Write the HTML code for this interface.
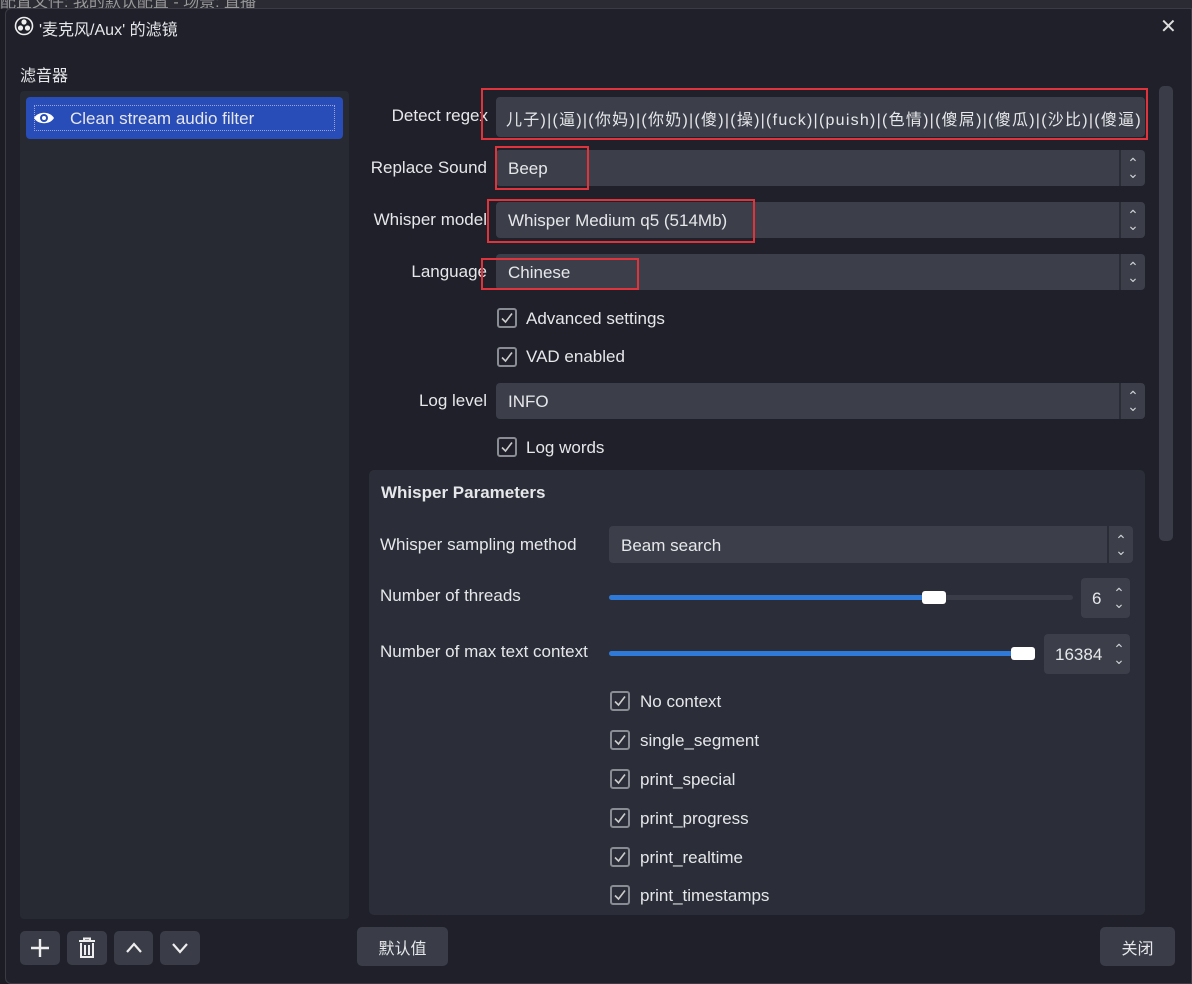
<!DOCTYPE html>
<html><head><meta charset="utf-8"><style>
*{box-sizing:border-box;margin:0;padding:0}
body{width:1192px;height:984px;background:#1b1c24;font-family:"Liberation Sans","Noto Sans CJK SC",sans-serif;color:#e6e7ea;font-size:17px;position:relative;overflow:hidden}
.a{position:absolute}
.lbl{position:absolute;text-align:right;white-space:nowrap}
.in{position:absolute;background:#3c3f4a;border-radius:4px;padding-left:12px;padding-top:2px;display:flex;align-items:center;white-space:nowrap;overflow:hidden}
.sp{position:absolute;right:0;top:0;bottom:0;width:26px;border-left:2px solid #2b2d36;display:flex;flex-direction:column;align-items:center;justify-content:center;font-size:14px;color:#cfd0d4;line-height:10px}
.red{position:absolute;border:2px solid #e0343c}
.cb{position:absolute;width:20px;height:20px;border:2px solid #8a8c94;border-radius:3px}
.cb svg{position:absolute;left:1px;top:1px}
.ct{position:absolute;white-space:nowrap;padding-top:1px}
.btn{position:absolute;background:#3a3d48;border-radius:5px;display:flex;align-items:center;justify-content:center}
</style></head><body>
<div class="a" style="left:0;top:0;width:1192px;height:9px;background:#2a2b33;overflow:hidden"><div class="a" style="left:0;top:-12px;color:#999;font-size:16px">配置文件: 我的默认配置 - 场景: 直播</div></div>
<div class="a" style="left:5px;top:8px;width:1187px;height:976px;background:#1f2029;border:1px solid #3a3b44;border-radius:6px 0 0 6px"></div>
<svg class="a" style="left:14px;top:16px" width="20" height="20" viewBox="0 0 20 20"><circle cx="10" cy="10" r="8.5" fill="none" stroke="#eee" stroke-width="1.6"/><circle cx="10" cy="6" r="2.6" fill="#eee"/><circle cx="6.5" cy="12" r="2.6" fill="#eee"/><circle cx="13.5" cy="12" r="2.6" fill="#eee"/></svg>
<div class="a" style="left:39px;top:16px;font-size:16px">'麦克风/Aux' 的滤镜</div>
<div class="a" style="left:1160px;top:14px;font-size:20px;color:#ddd">✕</div>
<div class="a" style="left:20px;top:62px;font-size:16px">滤音器</div>
<div class="a" style="left:20px;top:91px;width:329px;height:828px;background:#272a33;border-radius:4px"></div>
<div class="a" style="left:26px;top:97px;width:317px;height:42px;background:#284cb8;border-radius:4px"></div>
<div class="a" style="left:34px;top:105px;width:301px;height:26px;border:1px dotted #9aa4d8"></div>
<svg class="a" style="left:33px;top:110px" width="22" height="16" viewBox="0 0 22 16"><path d="M1 8C5 1 17 1 21 8C17 15 5 15 1 8Z" fill="#fff"/><circle cx="11" cy="8" r="4" fill="#284cb8"/><circle cx="11" cy="8" r="2" fill="#fff"/></svg>
<div class="a" style="left:70px;top:109px">Clean stream audio filter</div>

<div class="lbl" style="right:704px;top:106px">Detect regex</div>
<div class="in" style="left:496px;top:97px;width:649px;height:40px;font-size:16px;padding-left:10px;letter-spacing:1.25px">儿子)|(逼)|(你妈)|(你奶)|(傻)|(操)|(fuck)|(puish)|(色情)|(傻屌)|(傻瓜)|(沙比)|(傻逼)</div>
<div class="red" style="left:481px;top:88px;width:667px;height:52px"></div>

<div class="lbl" style="right:705px;top:158px">Replace Sound</div>
<div class="in" style="left:496px;top:150px;width:649px;height:36px">Beep<div class="sp">⌃<br>⌄</div></div>
<div class="red" style="left:495px;top:146px;width:94px;height:44px"></div>

<div class="lbl" style="right:705px;top:210px">Whisper model</div>
<div class="in" style="left:496px;top:202px;width:649px;height:36px">Whisper Medium q5 (514Mb)<div class="sp">⌃<br>⌄</div></div>
<div class="red" style="left:487px;top:199px;width:268px;height:44px"></div>

<div class="lbl" style="right:705px;top:262px">Language</div>
<div class="in" style="left:496px;top:254px;width:649px;height:36px">Chinese<div class="sp">⌃<br>⌄</div></div>
<div class="red" style="left:481px;top:258px;width:158px;height:32px"></div>

<div class="cb" style="left:497px;top:308px"><svg width="14" height="14" viewBox="0 0 14 14"><path d="M2 7.5L5.5 11L12 2.5" fill="none" stroke="#ccc" stroke-width="1.6"/></svg></div>
<div class="ct" style="left:526px;top:308px">Advanced settings</div>
<div class="cb" style="left:497px;top:347px"><svg width="14" height="14" viewBox="0 0 14 14"><path d="M2 7.5L5.5 11L12 2.5" fill="none" stroke="#ccc" stroke-width="1.6"/></svg></div>
<div class="ct" style="left:526px;top:346px">VAD enabled</div>

<div class="lbl" style="right:705px;top:391px">Log level</div>
<div class="in" style="left:496px;top:383px;width:649px;height:36px">INFO<div class="sp">⌃<br>⌄</div></div>

<div class="cb" style="left:497px;top:437px"><svg width="14" height="14" viewBox="0 0 14 14"><path d="M2 7.5L5.5 11L12 2.5" fill="none" stroke="#ccc" stroke-width="1.6"/></svg></div>
<div class="ct" style="left:526px;top:437px">Log words</div>

<div class="a" style="left:1159px;top:86px;width:14px;height:455px;background:#3a3d48;border-radius:5px"></div>

<div class="a" style="left:369px;top:470px;width:776px;height:445px;background:#2b2e38;border-radius:5px"></div>
<div class="a" style="left:381px;top:483px;font-weight:bold">Whisper Parameters</div>
<div class="ct" style="left:380px;top:534px">Whisper sampling method</div>
<div class="in" style="left:609px;top:526px;width:524px;height:37px">Beam search<div class="sp">⌃<br>⌄</div></div>

<div class="ct" style="left:380px;top:585px">Number of threads</div>
<div class="a" style="left:609px;top:595px;width:464px;height:5px;background:#3a3d48;border-radius:3px"></div>
<div class="a" style="left:609px;top:595px;width:316px;height:5px;background:#2f7ad8;border-radius:3px"></div>
<div class="a" style="left:922px;top:591px;width:24px;height:13px;background:#fff;border-radius:3px"></div>
<div class="in" style="left:1081px;top:578px;width:49px;height:40px;padding-left:11px">6<div class="sp" style="border:none;width:22px">⌃<br>⌄</div></div>

<div class="ct" style="left:380px;top:641px">Number of max text context</div>
<div class="a" style="left:609px;top:651px;width:415px;height:5px;background:#2f7ad8;border-radius:3px"></div>
<div class="a" style="left:1011px;top:647px;width:24px;height:13px;background:#fff;border-radius:3px"></div>
<div class="in" style="left:1044px;top:634px;width:86px;height:40px;padding-left:11px">16384<div class="sp" style="border:none;width:22px">⌃<br>⌄</div></div>

<div class="cb" style="left:610px;top:691px"><svg width="14" height="14" viewBox="0 0 14 14"><path d="M2 7.5L5.5 11L12 2.5" fill="none" stroke="#ccc" stroke-width="1.6"/></svg></div>
<div class="ct" style="left:640px;top:691px">No context</div>
<div class="cb" style="left:610px;top:730px"><svg width="14" height="14" viewBox="0 0 14 14"><path d="M2 7.5L5.5 11L12 2.5" fill="none" stroke="#ccc" stroke-width="1.6"/></svg></div>
<div class="ct" style="left:640px;top:730px">single_segment</div>
<div class="cb" style="left:610px;top:769px"><svg width="14" height="14" viewBox="0 0 14 14"><path d="M2 7.5L5.5 11L12 2.5" fill="none" stroke="#ccc" stroke-width="1.6"/></svg></div>
<div class="ct" style="left:640px;top:769px">print_special</div>
<div class="cb" style="left:610px;top:808px"><svg width="14" height="14" viewBox="0 0 14 14"><path d="M2 7.5L5.5 11L12 2.5" fill="none" stroke="#ccc" stroke-width="1.6"/></svg></div>
<div class="ct" style="left:640px;top:808px">print_progress</div>
<div class="cb" style="left:610px;top:847px"><svg width="14" height="14" viewBox="0 0 14 14"><path d="M2 7.5L5.5 11L12 2.5" fill="none" stroke="#ccc" stroke-width="1.6"/></svg></div>
<div class="ct" style="left:640px;top:847px">print_realtime</div>
<div class="cb" style="left:610px;top:885px"><svg width="14" height="14" viewBox="0 0 14 14"><path d="M2 7.5L5.5 11L12 2.5" fill="none" stroke="#ccc" stroke-width="1.6"/></svg></div>
<div class="ct" style="left:640px;top:885px">print_timestamps</div>
<div class="a" style="left:360px;top:915px;width:800px;height:12px;background:#1f2029"></div>

<div class="btn" style="left:20px;top:931px;width:40px;height:34px"><svg width="20" height="20"><path d="M10 1V19M1 10H19" stroke="#eee" stroke-width="2.4"/></svg></div>
<div class="btn" style="left:67px;top:931px;width:40px;height:34px"><svg width="18" height="22" viewBox="0 0 18 22"><path d="M1 4H17M6 4V1.5H12V4M3 6V20H15V6M7 8V18M11 8V18" fill="none" stroke="#eee" stroke-width="2"/></svg></div>
<div class="btn" style="left:114px;top:931px;width:39px;height:34px"><svg width="18" height="12"><path d="M2 10L9 2L16 10" fill="none" stroke="#eee" stroke-width="2.2"/></svg></div>
<div class="btn" style="left:160px;top:931px;width:40px;height:34px"><svg width="18" height="12"><path d="M2 2L9 10L16 2" fill="none" stroke="#eee" stroke-width="2.2"/></svg></div>
<div class="btn" style="left:357px;top:927px;width:91px;height:39px;font-size:16px">默认值</div>
<div class="btn" style="left:1100px;top:927px;width:75px;height:39px;font-size:16px">关闭</div>
</body></html>
